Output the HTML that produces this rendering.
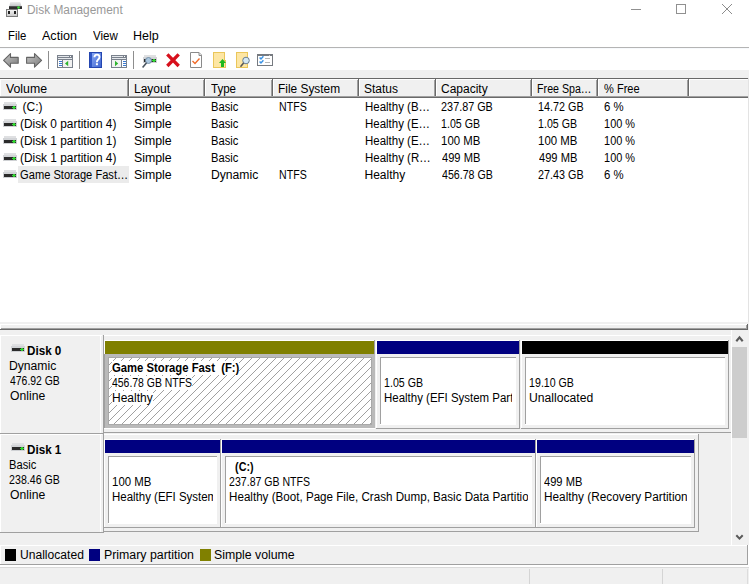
<!DOCTYPE html>
<html><head><meta charset="utf-8"><style>
html,body{margin:0;padding:0;}
body{width:749px;height:584px;overflow:hidden;position:relative;background:#fff;font-family:"Liberation Sans",sans-serif;font-size:12px;line-height:14px;color:#000;}
body>div,body>svg{position:absolute;}
div>svg{position:absolute;}
.t{white-space:pre;}
div span{white-space:pre;}
</style></head><body>
<svg style="left:0px;top:0px" width="26" height="20" viewBox="0 0 26 20">
<defs><linearGradient id="dg" x1="0" y1="0" x2="0" y2="1"><stop offset="0" stop-color="#eeeeee"/><stop offset="1" stop-color="#c4c6c8"/></linearGradient>
<linearGradient id="cg" x1="0" y1="0" x2="0" y2="1"><stop offset="0" stop-color="#f6f6f6"/><stop offset="1" stop-color="#c8c8c8"/></linearGradient></defs>
<path d="M9.5 6 L10 2.6 Q10.2 2 11 2 H19.5 Q20.3 2 20.5 2.6 L21.5 6 Z" fill="url(#dg)"/>
<rect x="9" y="6" width="13" height="3" fill="#2e2e2e"/><rect x="9" y="6" width="13" height="1" fill="#555"/>
<circle cx="18.5" cy="7.5" r="1.3" fill="#3ddc3d"/>
<rect x="6.5" y="9.5" width="11" height="7" fill="url(#cg)" stroke="#7a7a7a" stroke-width="1"/>
<rect x="8" y="11" width="2" height="3" fill="#222"/><rect x="14" y="11" width="2" height="3" fill="#222"/>
</svg>
<div class="t" style="left:27px;top:3px;color:#999999;transform:scaleX(0.9896);transform-origin:1px 0;">Disk Management</div>
<div style="left:631px;top:9px;width:10px;height:1px;background:#909090;"></div>
<div style="left:676px;top:4px;width:8px;height:8px;border:1px solid #909090"></div>
<svg style="left:721px;top:3px" width="12" height="12" viewBox="0 0 12 12"><path d="M1 1L11 11M11 1L1 11" stroke="#8c8c8c" stroke-width="1"/></svg>
<div class="t" style="left:8px;top:29px;color:#000;transform:scaleX(0.9444);transform-origin:1px 0;">File</div>
<div class="t" style="left:42px;top:29px;color:#000;transform:scaleX(1.0455);transform-origin:0px 0;">Action</div>
<div class="t" style="left:93px;top:29px;color:#000;transform:scaleX(0.9615);transform-origin:0px 0;">View</div>
<div class="t" style="left:133px;top:29px;color:#000;transform:scaleX(1.0435);transform-origin:1px 0;">Help</div>
<div style="left:0px;top:47px;width:749px;height:1px;background:#b4b4b4;"></div>
<div style="left:0px;top:48px;width:749px;height:1px;background:#f7f9fc;"></div>
<svg style="left:0px;top:52px" width="46" height="17" viewBox="0 0 46 17">
<defs><linearGradient id="ag" x1="0" y1="0" x2="1" y2="1"><stop offset="0" stop-color="#c4c4c4"/><stop offset="1" stop-color="#7c7c7c"/></linearGradient></defs>
<path d="M3.6 8.3 L10.5 1.6 V5.4 H18.2 V11.2 H10.5 V15.2 Z" fill="url(#ag)" stroke="#646464" stroke-width="1.1" stroke-linejoin="round"/>
<path d="M41.6 8.3 L34.5 1.6 V5.4 H26.6 V11.2 H34.5 V15.2 Z" fill="url(#ag)" stroke="#646464" stroke-width="1.1" stroke-linejoin="round"/></svg>
<div style="left:48px;top:51px;width:1px;height:18px;background:#8e8e8e;"></div>
<svg style="left:57px;top:55px" width="16" height="13" viewBox="0 0 16 13" shape-rendering="crispEdges">
<rect x="0" y="0" width="16" height="13" fill="#7a818c"/><rect x="1" y="1" width="14" height="11" fill="#fff"/>
<rect x="1" y="1" width="11" height="1" fill="#e4e7eb"/><rect x="12" y="1" width="1" height="1" fill="#7a818c"/><rect x="14" y="1" width="1" height="1" fill="#7a818c"/>
<rect x="1" y="2" width="14" height="1" fill="#7a818c"/><rect x="1" y="3" width="14" height="1" fill="#e4e7eb"/><rect x="1" y="4" width="14" height="1" fill="#7a818c"/><rect x="5" y="5" width="1" height="7" fill="#7a818c"/><rect x="6" y="5" width="9" height="7" fill="#f2f2f2"/>
<rect x="2" y="6" width="3" height="1" fill="#3a7ad0"/><rect x="2" y="8" width="3" height="1" fill="#3a7ad0"/><rect x="2" y="10" width="3" height="1" fill="#3a7ad0"/>
<path d="M8 8.5 L11.2 5.8 L11.2 11.2 Z" fill="#2eb42e" shape-rendering="auto"/></svg>
<div style="left:79px;top:51px;width:1px;height:18px;background:#8e8e8e;"></div>
<svg style="left:89px;top:52px" width="13" height="16" viewBox="0 0 13 16">
<defs><linearGradient id="hg" x1="0" y1="0" x2="1" y2="1"><stop offset="0" stop-color="#86a6f2"/><stop offset="1" stop-color="#3f66d2"/></linearGradient></defs>
<rect x="0" y="0" width="13" height="16" fill="#2446b0"/><rect x="3" y="1" width="9" height="14" fill="url(#hg)"/><rect x="1" y="1" width="2" height="14" fill="#2f56c6"/>
<path d="M5.4 5.2 Q5.6 2.6 8 2.6 Q10.5 2.6 10.5 5.1 Q10.5 6.8 8.8 7.9 Q7.9 8.6 7.9 10.2" fill="none" stroke="#fff" stroke-width="1.9"/>
<rect x="6.9" y="11.2" width="2" height="2" fill="#fff"/></svg>
<svg style="left:111px;top:55px" width="16" height="13" viewBox="0 0 16 13" shape-rendering="crispEdges">
<rect x="0" y="0" width="16" height="13" fill="#7a818c"/><rect x="1" y="1" width="14" height="11" fill="#fff"/>
<rect x="1" y="1" width="11" height="1" fill="#e4e7eb"/><rect x="12" y="1" width="1" height="1" fill="#7a818c"/><rect x="14" y="1" width="1" height="1" fill="#7a818c"/>
<rect x="1" y="2" width="14" height="1" fill="#7a818c"/><rect x="1" y="3" width="14" height="1" fill="#e4e7eb"/><rect x="1" y="4" width="14" height="1" fill="#7a818c"/><rect x="10" y="5" width="1" height="7" fill="#7a818c"/><rect x="1" y="5" width="9" height="7" fill="#f2f2f2"/>
<rect x="12" y="6" width="3" height="1" fill="#3a7ad0"/><rect x="12" y="8" width="3" height="1" fill="#3a7ad0"/><rect x="12" y="10" width="3" height="1" fill="#3a7ad0"/>
<path d="M4 5.8 L7.2 8.5 L4 11.2 Z" fill="#2eb42e" shape-rendering="auto"/></svg>
<div style="left:133px;top:51px;width:1px;height:18px;background:#8e8e8e;"></div>
<svg style="left:140px;top:54px" width="18" height="15" viewBox="0 0 18 15">
<g shape-rendering="crispEdges"><rect x="4" y="1" width="12" height="2" fill="#dfe0e2"/><rect x="3" y="3" width="14" height="2" fill="#d2d4d7"/>
<rect x="3" y="5" width="14" height="4" fill="#cfd1d4"/><rect x="4" y="5" width="12" height="3" fill="#2b2b2b"/>
<rect x="12" y="6" width="4" height="1" fill="#3bdc3b"/><rect x="13" y="5" width="2" height="3" fill="#2fd02f"/></g>
<circle cx="8.5" cy="6.5" r="3" fill="#a9c6de" stroke="#6f8aa3" stroke-width="0.9"/><path d="M6.6 8.8 L2.6 13.4" stroke="#4a5560" stroke-width="1.6"/></svg>
<svg style="left:165px;top:52px" width="16" height="16" viewBox="0 0 16 16"><path d="M2.3 2.3 L13.7 14 M13.7 2.3 L2.3 14" stroke="#d7101c" stroke-width="3.3"/></svg>
<svg style="left:189px;top:52px" width="14" height="16" viewBox="0 0 14 16">
<path d="M1.5 0.5 H10 L12.5 3 V15.5 H1.5 Z" fill="#fff" stroke="#8a8a8a" stroke-width="1"/><path d="M10 0.5 V3.5 H12.5" fill="#e8e8e8" stroke="#8a8a8a" stroke-width="1"/>
<path d="M3.5 9 L6 11.5 L10.5 6.5" fill="none" stroke="#f06a28" stroke-width="1.4"/></svg>
<svg style="left:213px;top:52px" width="15" height="16" viewBox="0 0 15 16" shape-rendering="crispEdges">
<rect x="0.5" y="0.5" width="11" height="15" fill="#fde6a4" stroke="#eac65a"/><rect x="10.5" y="8" width="2" height="7.5" fill="#fde6a4" stroke="#eac65a"/>
<path d="M6 11 L9.5 7 L13 11 L11 11 L11 15 L8 15 L8 11 Z" fill="#1fb81f" shape-rendering="auto"/></svg>
<svg style="left:236px;top:52px" width="15" height="16" viewBox="0 0 15 16">
<rect x="0.5" y="0.5" width="11" height="15" fill="#fde6a4" stroke="#eac65a"/>
<circle cx="10" cy="8.5" r="3.3" fill="#d4e8f4" stroke="#6a7e90" stroke-width="1"/><path d="M7.6 11 L4.5 14.8" stroke="#555" stroke-width="1.5"/></svg>
<svg style="left:257px;top:54px" width="16" height="12" viewBox="0 0 16 12" shape-rendering="crispEdges">
<rect x="0" y="0" width="16" height="12" fill="#767a80"/><rect x="1" y="2" width="14" height="9" fill="#fff"/><rect x="12" y="1" width="1" height="1" fill="#c8cacc"/>
<path d="M2.6 3.4 L4 4.9 L6.4 2.3 M2.6 7.4 L4 8.9 L6.4 6.3" fill="none" stroke="#3a92e4" stroke-width="1.5" shape-rendering="auto"/>
<rect x="8" y="4" width="5" height="1" fill="#b4b6b8"/><rect x="8" y="8" width="5" height="1" fill="#b4b6b8"/></svg>
<div style="left:0px;top:70px;width:749px;height:8px;background:#f0f0f0;"></div>
<div style="left:0px;top:78px;width:749px;height:1px;background:#696969;"></div>
<div style="left:0px;top:79px;width:749px;height:19px;background:#f0f0f0;"></div>
<div style="left:0px;top:79px;width:129px;height:1px;background:#fff;"></div>
<div style="left:0px;top:79px;width:1px;height:18px;background:#fff;"></div>
<div style="left:128px;top:79px;width:1px;height:19px;background:#696969;"></div>
<div style="left:127px;top:80px;width:1px;height:17px;background:#a0a0a0;"></div>
<div style="left:129px;top:79px;width:76px;height:1px;background:#fff;"></div>
<div style="left:129px;top:79px;width:1px;height:18px;background:#fff;"></div>
<div style="left:204px;top:79px;width:1px;height:19px;background:#696969;"></div>
<div style="left:203px;top:80px;width:1px;height:17px;background:#a0a0a0;"></div>
<div style="left:205px;top:79px;width:68px;height:1px;background:#fff;"></div>
<div style="left:205px;top:79px;width:1px;height:18px;background:#fff;"></div>
<div style="left:272px;top:79px;width:1px;height:19px;background:#696969;"></div>
<div style="left:271px;top:80px;width:1px;height:17px;background:#a0a0a0;"></div>
<div style="left:273px;top:79px;width:86px;height:1px;background:#fff;"></div>
<div style="left:273px;top:79px;width:1px;height:18px;background:#fff;"></div>
<div style="left:358px;top:79px;width:1px;height:19px;background:#696969;"></div>
<div style="left:357px;top:80px;width:1px;height:17px;background:#a0a0a0;"></div>
<div style="left:359px;top:79px;width:77px;height:1px;background:#fff;"></div>
<div style="left:359px;top:79px;width:1px;height:18px;background:#fff;"></div>
<div style="left:435px;top:79px;width:1px;height:19px;background:#696969;"></div>
<div style="left:434px;top:80px;width:1px;height:17px;background:#a0a0a0;"></div>
<div style="left:436px;top:79px;width:96px;height:1px;background:#fff;"></div>
<div style="left:436px;top:79px;width:1px;height:18px;background:#fff;"></div>
<div style="left:531px;top:79px;width:1px;height:19px;background:#696969;"></div>
<div style="left:530px;top:80px;width:1px;height:17px;background:#a0a0a0;"></div>
<div style="left:532px;top:79px;width:66px;height:1px;background:#fff;"></div>
<div style="left:532px;top:79px;width:1px;height:18px;background:#fff;"></div>
<div style="left:597px;top:79px;width:1px;height:19px;background:#696969;"></div>
<div style="left:596px;top:80px;width:1px;height:17px;background:#a0a0a0;"></div>
<div style="left:598px;top:79px;width:91px;height:1px;background:#fff;"></div>
<div style="left:598px;top:79px;width:1px;height:18px;background:#fff;"></div>
<div style="left:688px;top:79px;width:1px;height:19px;background:#696969;"></div>
<div style="left:687px;top:80px;width:1px;height:17px;background:#a0a0a0;"></div>
<div style="left:689px;top:79px;width:60px;height:1px;background:#fff;"></div>
<div style="left:689px;top:79px;width:1px;height:18px;background:#fff;"></div>
<div style="left:0px;top:96px;width:749px;height:1px;background:#a0a0a0;"></div>
<div style="left:0px;top:97px;width:749px;height:1px;background:#696969;"></div>
<div class="t" style="left:6px;top:82px;color:#000;transform:scaleX(1.0250);transform-origin:0px 0;">Volume</div>
<div class="t" style="left:134px;top:82px;color:#000;">Layout</div>
<div class="t" style="left:211px;top:82px;color:#000;transform:scaleX(0.9615);transform-origin:0px 0;">Type</div>
<div class="t" style="left:278px;top:82px;color:#000;transform:scaleX(0.9903);transform-origin:1px 0;">File System</div>
<div class="t" style="left:364px;top:82px;color:#000;">Status</div>
<div class="t" style="left:441px;top:82px;color:#000;">Capacity</div>
<div class="t" style="left:537px;top:82px;color:#000;transform:scaleX(0.8864);transform-origin:1px 0;">Free Spa…</div>
<div class="t" style="left:604px;top:82px;color:#000;transform:scaleX(0.9211);transform-origin:0px 0;">% Free</div>
<div style="left:0px;top:98px;width:749px;height:224px;background:#fff;"></div>
<div style="left:0px;top:78px;width:748px;height:1px;background:#696969;"></div>
<div style="left:748px;top:78px;width:1px;height:244px;background:#e3e3e3;"></div>
<svg style="left:3px;top:102px" width="14" height="9" viewBox="0 0 14 9" shape-rendering="crispEdges">
<rect x="1" y="0" width="12" height="2" fill="#dfe0e2"/><rect x="0" y="2" width="14" height="2" fill="#d2d4d7"/>
<rect x="0" y="4" width="14" height="4" fill="#cfd1d4"/><rect x="1" y="4" width="12" height="3" fill="#2b2b2b"/>
<rect x="9" y="5" width="4" height="1" fill="#3bdc3b"/><rect x="10" y="4" width="2" height="3" fill="#2fd02f"/>
</svg>
<div class="t" style="left:22.5px;top:100px;color:#000;">(C:)</div>
<div class="t" style="left:134px;top:100px;color:#000;transform:scaleX(1.0286);transform-origin:1px 0;">Simple</div>
<div class="t" style="left:210.5px;top:100px;color:#000;transform:scaleX(0.9286);transform-origin:1px 0;">Basic</div>
<div class="t" style="left:278.5px;top:100px;color:#000;transform:scaleX(0.8833);transform-origin:1px 0;">NTFS</div>
<div class="t" style="left:364.5px;top:100px;color:#000;transform:scaleX(0.9545);transform-origin:1px 0;">Healthy (B…</div>
<div class="t" style="left:441px;top:100px;color:#000;transform:scaleX(0.9018);transform-origin:1px 0;">237.87 GB</div>
<div class="t" style="left:537.5px;top:100px;color:#000;transform:scaleX(0.8980);transform-origin:1px 0;">14.72 GB</div>
<div class="t" style="left:603.5px;top:100px;color:#000;transform:scaleX(0.9474);transform-origin:1px 0;">6 %</div>
<svg style="left:3px;top:119px" width="14" height="9" viewBox="0 0 14 9" shape-rendering="crispEdges">
<rect x="1" y="0" width="12" height="2" fill="#dfe0e2"/><rect x="0" y="2" width="14" height="2" fill="#d2d4d7"/>
<rect x="0" y="4" width="14" height="4" fill="#cfd1d4"/><rect x="1" y="4" width="12" height="3" fill="#2b2b2b"/>
<rect x="9" y="5" width="4" height="1" fill="#3bdc3b"/><rect x="10" y="4" width="2" height="3" fill="#2fd02f"/>
</svg>
<div class="t" style="left:19.5px;top:117px;color:#000;transform:scaleX(0.9896);transform-origin:1px 0;">(Disk 0 partition 4)</div>
<div class="t" style="left:134px;top:117px;color:#000;transform:scaleX(1.0286);transform-origin:1px 0;">Simple</div>
<div class="t" style="left:210.5px;top:117px;color:#000;transform:scaleX(0.9286);transform-origin:1px 0;">Basic</div>
<div class="t" style="left:364.5px;top:117px;color:#000;transform:scaleX(0.9545);transform-origin:1px 0;">Healthy (E…</div>
<div class="t" style="left:441px;top:117px;color:#000;transform:scaleX(0.8837);transform-origin:1px 0;">1.05 GB</div>
<div class="t" style="left:537.5px;top:117px;color:#000;transform:scaleX(0.8837);transform-origin:1px 0;">1.05 GB</div>
<div class="t" style="left:603.5px;top:117px;color:#000;transform:scaleX(0.9091);transform-origin:1px 0;">100 %</div>
<svg style="left:3px;top:136px" width="14" height="9" viewBox="0 0 14 9" shape-rendering="crispEdges">
<rect x="1" y="0" width="12" height="2" fill="#dfe0e2"/><rect x="0" y="2" width="14" height="2" fill="#d2d4d7"/>
<rect x="0" y="4" width="14" height="4" fill="#cfd1d4"/><rect x="1" y="4" width="12" height="3" fill="#2b2b2b"/>
<rect x="9" y="5" width="4" height="1" fill="#3bdc3b"/><rect x="10" y="4" width="2" height="3" fill="#2fd02f"/>
</svg>
<div class="t" style="left:19.5px;top:134px;color:#000;transform:scaleX(0.9896);transform-origin:1px 0;">(Disk 1 partition 1)</div>
<div class="t" style="left:134px;top:134px;color:#000;transform:scaleX(1.0286);transform-origin:1px 0;">Simple</div>
<div class="t" style="left:210.5px;top:134px;color:#000;transform:scaleX(0.9286);transform-origin:1px 0;">Basic</div>
<div class="t" style="left:364.5px;top:134px;color:#000;transform:scaleX(0.9545);transform-origin:1px 0;">Healthy (E…</div>
<div class="t" style="left:441px;top:134px;color:#000;transform:scaleX(0.9500);transform-origin:1px 0;">100 MB</div>
<div class="t" style="left:537.5px;top:134px;color:#000;transform:scaleX(0.9500);transform-origin:1px 0;">100 MB</div>
<div class="t" style="left:603.5px;top:134px;color:#000;transform:scaleX(0.9091);transform-origin:1px 0;">100 %</div>
<svg style="left:3px;top:153px" width="14" height="9" viewBox="0 0 14 9" shape-rendering="crispEdges">
<rect x="1" y="0" width="12" height="2" fill="#dfe0e2"/><rect x="0" y="2" width="14" height="2" fill="#d2d4d7"/>
<rect x="0" y="4" width="14" height="4" fill="#cfd1d4"/><rect x="1" y="4" width="12" height="3" fill="#2b2b2b"/>
<rect x="9" y="5" width="4" height="1" fill="#3bdc3b"/><rect x="10" y="4" width="2" height="3" fill="#2fd02f"/>
</svg>
<div class="t" style="left:19.5px;top:151px;color:#000;transform:scaleX(0.9896);transform-origin:1px 0;">(Disk 1 partition 4)</div>
<div class="t" style="left:134px;top:151px;color:#000;transform:scaleX(1.0286);transform-origin:1px 0;">Simple</div>
<div class="t" style="left:210.5px;top:151px;color:#000;transform:scaleX(0.9286);transform-origin:1px 0;">Basic</div>
<div class="t" style="left:364.5px;top:151px;color:#000;transform:scaleX(0.9545);transform-origin:1px 0;">Healthy (R…</div>
<div class="t" style="left:442px;top:151px;color:#000;transform:scaleX(0.9268);transform-origin:0px 0;">499 MB</div>
<div class="t" style="left:538.5px;top:151px;color:#000;transform:scaleX(0.9268);transform-origin:0px 0;">499 MB</div>
<div class="t" style="left:603.5px;top:151px;color:#000;transform:scaleX(0.9091);transform-origin:1px 0;">100 %</div>
<div style="left:18px;top:166px;width:111px;height:17px;background:#ebebeb;"></div>
<svg style="left:3px;top:170px" width="14" height="9" viewBox="0 0 14 9" shape-rendering="crispEdges">
<rect x="1" y="0" width="12" height="2" fill="#dfe0e2"/><rect x="0" y="2" width="14" height="2" fill="#d2d4d7"/>
<rect x="0" y="4" width="14" height="4" fill="#cfd1d4"/><rect x="1" y="4" width="12" height="3" fill="#2b2b2b"/>
<rect x="9" y="5" width="4" height="1" fill="#3bdc3b"/><rect x="10" y="4" width="2" height="3" fill="#2fd02f"/>
</svg>
<div class="t" style="left:19.5px;top:168px;color:#000;transform:scaleX(0.9254);transform-origin:1px 0;">Game Storage Fast…</div>
<div class="t" style="left:134px;top:168px;color:#000;transform:scaleX(1.0286);transform-origin:1px 0;">Simple</div>
<div class="t" style="left:210.5px;top:168px;color:#000;transform:scaleX(1.0133);transform-origin:1px 0;">Dynamic</div>
<div class="t" style="left:278.5px;top:168px;color:#000;transform:scaleX(0.8833);transform-origin:1px 0;">NTFS</div>
<div class="t" style="left:364.5px;top:168px;color:#000;">Healthy</div>
<div class="t" style="left:442px;top:168px;color:#000;transform:scaleX(0.8860);transform-origin:0px 0;">456.78 GB</div>
<div class="t" style="left:537.5px;top:168px;color:#000;transform:scaleX(0.8980);transform-origin:1px 0;">27.43 GB</div>
<div class="t" style="left:603.5px;top:168px;color:#000;transform:scaleX(0.9474);transform-origin:1px 0;">6 %</div>
<div style="left:0px;top:322px;width:749px;height:8px;background:#f0f0f0;"></div>
<div style="left:0px;top:324px;width:747px;height:1px;background:#fff;"></div>
<div style="left:0px;top:324px;width:1px;height:5px;background:#fff;"></div>
<div style="left:1px;top:328px;width:746px;height:1px;background:#a0a0a0;"></div>
<div style="left:746px;top:325px;width:1px;height:4px;background:#a0a0a0;"></div>
<div style="left:0px;top:329px;width:748px;height:1px;background:#696969;"></div>
<div style="left:747px;top:324px;width:1px;height:6px;background:#696969;"></div>
<div style="left:0px;top:330px;width:749px;height:215px;background:#f0f0f0;"></div>
<div style="left:731px;top:330px;width:1px;height:215px;background:#fff;"></div>
<div style="left:732px;top:347px;width:15px;height:91px;background:#cdcdcd;"></div>
<svg style="left:735px;top:334px" width="9" height="9" viewBox="0 0 9 9"><path d="M1.3 7.2 L4.5 3.4 L7.7 7.2" fill="none" stroke="#5a5a5a" stroke-width="2.1"/></svg>
<svg style="left:735px;top:533px" width="9" height="8" viewBox="0 0 9 8"><path d="M1.3 2.2 L4.5 5.6 L7.7 2.2" fill="none" stroke="#5a5a5a" stroke-width="2"/></svg>
<div style="left:0px;top:335px;width:102px;height:1px;background:#fff;"></div>
<div style="left:0px;top:335px;width:1px;height:98px;background:#fff;"></div>
<div style="left:100px;top:335px;width:1px;height:98px;background:#fff;"></div>
<div style="left:0px;top:433px;width:104px;height:1px;background:#a0a0a0;"></div>
<div style="left:103px;top:335px;width:628px;height:1px;background:#fff;"></div>
<div style="left:103px;top:335px;width:1px;height:98px;background:#a0a0a0;"></div>
<div style="left:103px;top:432px;width:628px;height:1px;background:#a0a0a0;"></div>
<svg style="left:11px;top:344px" width="14" height="9" viewBox="0 0 14 9" shape-rendering="crispEdges">
<rect x="1" y="0" width="12" height="2" fill="#dfe0e2"/><rect x="0" y="2" width="14" height="2" fill="#d2d4d7"/>
<rect x="0" y="4" width="14" height="4" fill="#cfd1d4"/><rect x="1" y="4" width="12" height="3" fill="#2b2b2b"/>
<rect x="9" y="5" width="4" height="1" fill="#3bdc3b"/><rect x="10" y="4" width="2" height="3" fill="#2fd02f"/>
</svg>
<div class="t" style="left:27px;top:344px;color:#000;transform:scaleX(0.9706);transform-origin:1px 0;font-weight:bold;">Disk 0</div>
<div class="t" style="left:9px;top:359px;color:#000;transform:scaleX(1.0133);transform-origin:1px 0;">Dynamic</div>
<div class="t" style="left:10px;top:374px;color:#000;transform:scaleX(0.8684);transform-origin:0px 0;">476.92 GB</div>
<div class="t" style="left:10px;top:389px;color:#000;transform:scaleX(1.0147);transform-origin:0px 0;">Online</div>
<div style="left:104px;top:340px;width:271px;height:1px;background:#fff;"></div>
<div style="left:104px;top:340px;width:1px;height:89px;background:#fff;"></div>
<div style="left:374px;top:340px;width:1px;height:89px;background:#a0a0a0;"></div>
<div style="left:104px;top:428px;width:271px;height:1px;background:#a0a0a0;"></div>
<div style="left:105px;top:341px;width:269px;height:13px;background:#808000;"></div>
<div style="left:104px;top:428px;width:271px;height:1px;background:#fff;"></div>
<div style="left:104px;top:354px;width:271px;height:74px;background:#bababa;"></div>
<div style="left:104px;top:354px;width:1px;height:74px;background:#a0a0a0;"></div>
<div style="left:108px;top:357px;width:264px;height:68px;background:#a9a9a9;"></div>
<div style="left:109px;top:358px;width:262px;height:66px;background:#fff;"></div>
<div style="left:109px;top:358px;width:262px;height:66px;overflow:hidden"><svg width="100%" height="100%" style="left:0;top:0" shape-rendering="crispEdges"><defs><pattern id="hp" width="8" height="8" patternUnits="userSpaceOnUse" x="7" y="0">
<path d="M7 0h1v1h-1zM6 1h1v1h-1zM5 2h1v1h-1zM4 3h1v1h-1zM3 4h1v1h-1zM2 5h1v1h-1zM1 6h1v1h-1zM0 7h1v1h-1z" fill="#a0a0a0"/></pattern></defs><rect width="100%" height="100%" fill="url(#hp)"/></svg></div>
<div style="left:112px;top:361px;width:255px;height:15px;overflow:hidden"><span style="display:inline-block;transform:scaleX(0.9407);transform-origin:0px 0;font-weight:bold;background:#fff;color:#000">Game Storage Fast  (F:)</span></div>
<div style="left:112px;top:376px;width:255px;height:15px;overflow:hidden"><span style="display:inline-block;transform:scaleX(0.8696);transform-origin:0px 0;background:#fff;color:#000">456.78 GB NTFS</span></div>
<div style="left:112px;top:391px;width:255px;height:15px;overflow:hidden"><span style="display:inline-block;background:#fff;color:#000">Healthy</span></div>
<div style="left:376px;top:340px;width:144px;height:1px;background:#fff;"></div>
<div style="left:376px;top:340px;width:1px;height:89px;background:#fff;"></div>
<div style="left:519px;top:340px;width:1px;height:89px;background:#a0a0a0;"></div>
<div style="left:376px;top:428px;width:144px;height:1px;background:#a0a0a0;"></div>
<div style="left:377px;top:341px;width:142px;height:13px;background:#000080;"></div>
<div style="left:380px;top:357px;width:136px;height:68px;background:#fff;"></div>
<div style="left:380px;top:357px;width:136px;height:1px;background:#a0a0a0;"></div>
<div style="left:380px;top:357px;width:1px;height:67px;background:#a0a0a0;"></div>
<div style="left:384px;top:376px;width:128px;height:15px;overflow:hidden"><span style="display:inline-block;transform:scaleX(0.8837);transform-origin:1px 0;background:#fff;color:#000">1.05 GB</span></div>
<div style="left:384px;top:391px;width:128px;height:15px;overflow:hidden"><span style="display:inline-block;transform:scaleX(0.9554);transform-origin:1px 0;background:#fff;color:#000">Healthy (EFI System Partition)</span></div>
<div style="left:521px;top:340px;width:208px;height:1px;background:#fff;"></div>
<div style="left:521px;top:340px;width:1px;height:89px;background:#fff;"></div>
<div style="left:728px;top:340px;width:1px;height:89px;background:#a0a0a0;"></div>
<div style="left:521px;top:428px;width:208px;height:1px;background:#a0a0a0;"></div>
<div style="left:522px;top:341px;width:206px;height:13px;background:#000000;"></div>
<div style="left:525px;top:357px;width:200px;height:68px;background:#fff;"></div>
<div style="left:525px;top:357px;width:200px;height:1px;background:#a0a0a0;"></div>
<div style="left:525px;top:357px;width:1px;height:67px;background:#a0a0a0;"></div>
<div style="left:529px;top:376px;width:192px;height:15px;overflow:hidden"><span style="display:inline-block;transform:scaleX(0.8839);transform-origin:1px 0;background:#fff;color:#000">19.10 GB</span></div>
<div style="left:529px;top:391px;width:192px;height:15px;overflow:hidden"><span style="display:inline-block;transform:scaleX(1.0131);transform-origin:1px 0;background:#fff;color:#000">Unallocated</span></div>
<div style="left:0px;top:434px;width:102px;height:1px;background:#fff;"></div>
<div style="left:0px;top:434px;width:1px;height:98px;background:#fff;"></div>
<div style="left:100px;top:434px;width:1px;height:98px;background:#fff;"></div>
<div style="left:0px;top:532px;width:104px;height:1px;background:#a0a0a0;"></div>
<div style="left:103px;top:434px;width:596px;height:1px;background:#fff;"></div>
<div style="left:103px;top:434px;width:1px;height:98px;background:#a0a0a0;"></div>
<div style="left:103px;top:531px;width:596px;height:1px;background:#a0a0a0;"></div>
<div style="left:698px;top:434px;width:1px;height:98px;background:#a0a0a0;"></div>
<svg style="left:11px;top:443px" width="14" height="9" viewBox="0 0 14 9" shape-rendering="crispEdges">
<rect x="1" y="0" width="12" height="2" fill="#dfe0e2"/><rect x="0" y="2" width="14" height="2" fill="#d2d4d7"/>
<rect x="0" y="4" width="14" height="4" fill="#cfd1d4"/><rect x="1" y="4" width="12" height="3" fill="#2b2b2b"/>
<rect x="9" y="5" width="4" height="1" fill="#3bdc3b"/><rect x="10" y="4" width="2" height="3" fill="#2fd02f"/>
</svg>
<div class="t" style="left:27px;top:443px;color:#000;transform:scaleX(0.9706);transform-origin:1px 0;font-weight:bold;">Disk 1</div>
<div class="t" style="left:9px;top:458px;color:#000;transform:scaleX(0.9286);transform-origin:1px 0;">Basic</div>
<div class="t" style="left:9px;top:473px;color:#000;transform:scaleX(0.8839);transform-origin:1px 0;">238.46 GB</div>
<div class="t" style="left:10px;top:488px;color:#000;transform:scaleX(1.0147);transform-origin:0px 0;">Online</div>
<div style="left:104px;top:439px;width:117px;height:1px;background:#fff;"></div>
<div style="left:104px;top:439px;width:1px;height:89px;background:#fff;"></div>
<div style="left:220px;top:439px;width:1px;height:89px;background:#a0a0a0;"></div>
<div style="left:104px;top:527px;width:117px;height:1px;background:#a0a0a0;"></div>
<div style="left:105px;top:440px;width:115px;height:13px;background:#000080;"></div>
<div style="left:108px;top:456px;width:109px;height:68px;background:#fff;"></div>
<div style="left:108px;top:456px;width:109px;height:1px;background:#a0a0a0;"></div>
<div style="left:108px;top:456px;width:1px;height:67px;background:#a0a0a0;"></div>
<div style="left:112px;top:475px;width:101px;height:15px;overflow:hidden"><span style="display:inline-block;transform:scaleX(0.9500);transform-origin:1px 0;background:#fff;color:#000">100 MB</span></div>
<div style="left:112px;top:490px;width:101px;height:15px;overflow:hidden"><span style="display:inline-block;transform:scaleX(0.9554);transform-origin:1px 0;background:#fff;color:#000">Healthy (EFI System Partition)</span></div>
<div style="left:221px;top:439px;width:315px;height:1px;background:#fff;"></div>
<div style="left:221px;top:439px;width:1px;height:89px;background:#fff;"></div>
<div style="left:535px;top:439px;width:1px;height:89px;background:#a0a0a0;"></div>
<div style="left:221px;top:527px;width:315px;height:1px;background:#a0a0a0;"></div>
<div style="left:222px;top:440px;width:313px;height:13px;background:#000080;"></div>
<div style="left:225px;top:456px;width:307px;height:68px;background:#fff;"></div>
<div style="left:225px;top:456px;width:307px;height:1px;background:#a0a0a0;"></div>
<div style="left:225px;top:456px;width:1px;height:67px;background:#a0a0a0;"></div>
<div style="left:235px;top:460px;width:299px;height:15px;overflow:hidden"><span style="display:inline-block;transform:scaleX(0.8947);transform-origin:1px 0;font-weight:bold;background:#fff;color:#000">(C:)</span></div>
<div style="left:229px;top:475px;width:299px;height:15px;overflow:hidden"><span style="display:inline-block;transform:scaleX(0.8791);transform-origin:1px 0;background:#fff;color:#000">237.87 GB NTFS</span></div>
<div style="left:229px;top:490px;width:299px;height:15px;overflow:hidden"><span style="display:inline-block;transform:scaleX(0.9682);transform-origin:1px 0;background:#fff;color:#000">Healthy (Boot, Page File, Crash Dump, Basic Data Partition)</span></div>
<div style="left:536px;top:439px;width:159px;height:1px;background:#fff;"></div>
<div style="left:536px;top:439px;width:1px;height:89px;background:#fff;"></div>
<div style="left:694px;top:439px;width:1px;height:89px;background:#a0a0a0;"></div>
<div style="left:536px;top:527px;width:159px;height:1px;background:#a0a0a0;"></div>
<div style="left:537px;top:440px;width:157px;height:13px;background:#000080;"></div>
<div style="left:540px;top:456px;width:151px;height:68px;background:#fff;"></div>
<div style="left:540px;top:456px;width:151px;height:1px;background:#a0a0a0;"></div>
<div style="left:540px;top:456px;width:1px;height:67px;background:#a0a0a0;"></div>
<div style="left:544px;top:475px;width:143px;height:15px;overflow:hidden"><span style="display:inline-block;transform:scaleX(0.9268);transform-origin:0px 0;background:#fff;color:#000">499 MB</span></div>
<div style="left:544px;top:490px;width:143px;height:15px;overflow:hidden"><span style="display:inline-block;transform:scaleX(0.9832);transform-origin:1px 0;background:#fff;color:#000">Healthy (Recovery Partition)</span></div>
<div style="left:0px;top:545px;width:748px;height:1px;background:#fff;"></div>
<div style="left:747px;top:545px;width:1px;height:20px;background:#a0a0a0;"></div>
<div style="left:0px;top:564px;width:748px;height:1px;background:#a0a0a0;"></div>
<div style="left:0px;top:546px;width:747px;height:18px;background:#f0f0f0;"></div>
<div style="left:0px;top:545px;width:1px;height:19px;background:#fff;"></div>
<div style="left:5px;top:549px;width:11px;height:12px;background:#000;"></div>
<div class="t" style="left:20px;top:548px;color:#000;transform:scaleX(1.0081);transform-origin:1px 0;">Unallocated</div>
<div style="left:89px;top:549px;width:11px;height:12px;background:#000080;"></div>
<div class="t" style="left:104px;top:548px;color:#000;transform:scaleX(1.0291);transform-origin:1px 0;">Primary partition</div>
<div style="left:200px;top:549px;width:11px;height:12px;background:#808000;"></div>
<div class="t" style="left:214px;top:548px;color:#000;transform:scaleX(1.0260);transform-origin:1px 0;">Simple volume</div>
<div style="left:0px;top:565px;width:749px;height:19px;background:#f0f0f0;"></div>
<div style="left:0px;top:565px;width:749px;height:1px;background:#fff;"></div>
<div style="left:0px;top:566px;width:749px;height:1px;background:#fff;"></div>
<div style="left:0px;top:567px;width:749px;height:1px;background:#dadada;"></div>
<div style="left:529px;top:569px;width:1px;height:15px;background:#d4d4d4;"></div>
<div style="left:662px;top:569px;width:1px;height:15px;background:#d4d4d4;"></div>
<div style="left:747px;top:569px;width:1px;height:15px;background:#dcdcdc;"></div>
</body></html>
